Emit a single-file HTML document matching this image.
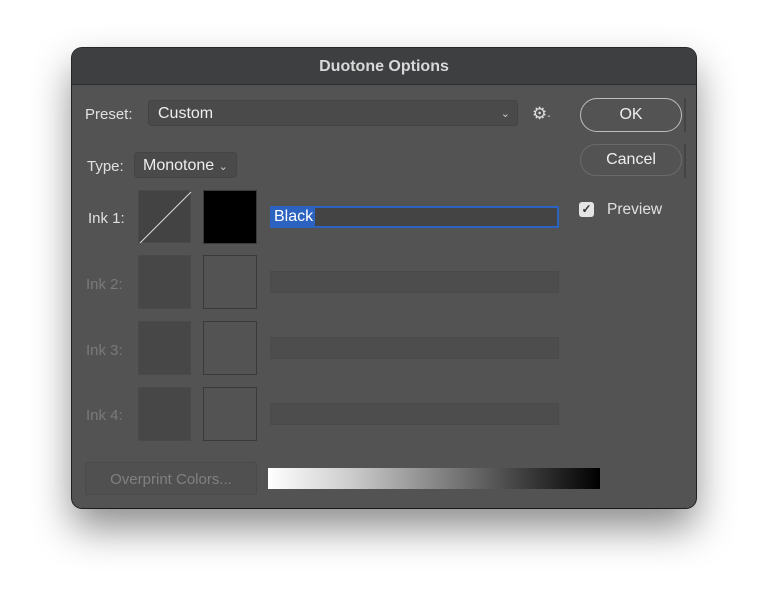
<!DOCTYPE html>
<html><head><style>
*{margin:0;padding:0;box-sizing:border-box}
body{width:768px;height:604px;background:#fff;font-family:"Liberation Sans",sans-serif;position:relative;overflow:hidden}
.dlg{position:absolute;left:72px;top:48px;width:624px;height:460px;background:#535353;border-radius:10px;box-shadow:0 20px 40px rgba(0,0,0,.45),0 0 0 1px #2a2a2a;overflow:hidden}
.tb{position:absolute;left:0;top:0;width:624px;height:37px;background:#3e3f41;border-bottom:1px solid #2c2c2c;color:#d8d8d8;font-weight:bold;font-size:16px;text-align:center;line-height:38px}
.a{position:absolute}
.lbl{color:#e0e0e0;font-size:15px}
.dis{color:#7a7a7a;font-size:15px}
.dd{background:#4a4a4a;border:1px solid #444;border-radius:4px;color:#eee;font-size:16px}
.sw{background:#474747;border:1px solid #4a4a4a}
.sw2{border:1px solid #3a3a3a;background:#535353}
.fld{background:#4d4d4d;border:1px solid #4a4a4a}
.btn{border:1.5px solid #bdbdbd;border-radius:17px;color:#eee;font-size:16px;text-align:center}
</style></head><body>
<div class="dlg">
<div class="tb">Duotone Options</div>
<div class="a lbl" style="left:13px;top:58px">Preset:</div>
<div class="a dd" style="left:76px;top:52px;width:370px;height:26px;line-height:26px;padding-left:9px">Custom<span style="position:absolute;right:7px;top:0;font-size:11px;color:#ccc">&#8964;</span></div>
<div class="a" style="left:460px;top:56px;color:#ddd;font-size:17px">&#9881;<span style="font-size:10px">-</span></div>
<div class="a btn" style="left:508px;top:50px;width:102px;height:34px;line-height:32px">OK</div>
<div class="a btn" style="left:508px;top:96px;width:102px;height:32px;line-height:30px;border-color:#6a6a6a">Cancel</div>
<div class="a" style="left:612px;top:50px;width:2px;height:34px;background:#444"></div>
<div class="a" style="left:612px;top:96px;width:2px;height:34px;background:#444"></div>
<div class="a lbl" style="left:15px;top:110px">Type:</div>
<div class="a dd" style="left:62px;top:104px;width:103px;height:26px;line-height:26px;padding-left:8px">Monotone <span style="font-size:11px;color:#ccc">&#8964;</span></div>
<div class="a lbl" style="left:16px;top:162px">Ink 1:</div>
<div class="a sw" style="left:66px;top:142px;width:53px;height:53px;background:#434343"><svg width="53" height="53"><line x1="1" y1="52" x2="52" y2="1" stroke="#ddd" stroke-width="1"/></svg></div>
<div class="a" style="left:131px;top:142px;width:54px;height:54px;background:#000;border:1px solid #3a3a3a"></div>
<div class="a" style="left:198px;top:158px;width:289px;height:22px;background:#444;border:2px solid #2d63c0"><span style="background:#2d63c0;color:#fff;font-size:16px;line-height:18px;display:inline-block;padding:0 2px">Black</span></div>
<div class="a" style="left:507px;top:154px;width:15px;height:15px;background:#e4e4e4;border-radius:3px;color:#333;font-size:12px;line-height:15px;text-align:center;font-weight:bold">&#10003;</div>
<div class="a lbl" style="left:535px;top:153px;font-size:15.5px">Preview</div>

<div class="a dis" style="left:14px;top:228px">Ink 2:</div>
<div class="a sw" style="left:66px;top:207px;width:53px;height:54px"></div>
<div class="a sw2" style="left:131px;top:207px;width:54px;height:54px"></div>
<div class="a fld" style="left:198px;top:223px;width:289px;height:22px"></div>

<div class="a dis" style="left:14px;top:294px">Ink 3:</div>
<div class="a sw" style="left:66px;top:273px;width:53px;height:54px"></div>
<div class="a sw2" style="left:131px;top:273px;width:54px;height:54px"></div>
<div class="a fld" style="left:198px;top:289px;width:289px;height:22px"></div>

<div class="a dis" style="left:14px;top:359px">Ink 4:</div>
<div class="a sw" style="left:66px;top:339px;width:53px;height:54px"></div>
<div class="a sw2" style="left:131px;top:339px;width:54px;height:54px"></div>
<div class="a fld" style="left:198px;top:355px;width:289px;height:22px"></div>

<div class="a" style="left:13px;top:414px;width:172px;height:33px;background:#505050;border:1px solid #4a4a4a;border-radius:3px;color:#808080;font-size:15px;text-align:center;line-height:33px">Overprint Colors...</div>
<div class="a" style="left:196px;top:420px;width:332px;height:21px;background:linear-gradient(to right,#fff,#ccc 25%,#888 50%,#444 75%,#000)"></div>
</div>
</body></html>
